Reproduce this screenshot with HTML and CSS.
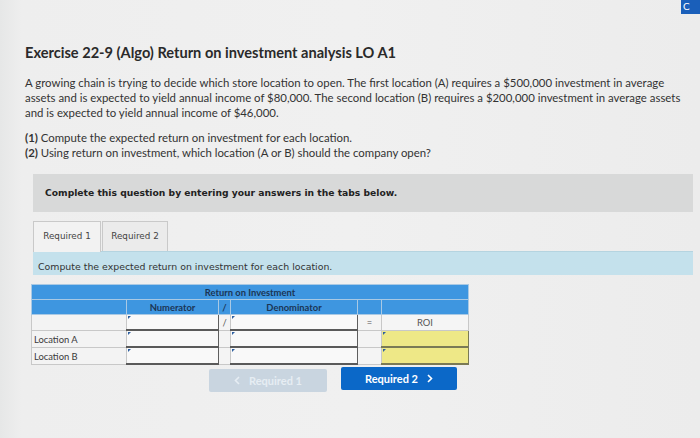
FILE: index.html
```html
<!DOCTYPE html>
<html>
<head>
<meta charset="utf-8">
<link rel="stylesheet" href="styles.css">
</head>
<body>
<div class="corner-btn">C</div>
<div class="page">
  <h1 class="title">Exercise 22-9 (Algo) Return on investment analysis LO A1</h1>
  <p class="intro">A growing chain is trying to decide which store location to open. The first location (A) requires a $500,000 investment in average<br>assets and is expected to yield annual income of $80,000. The second location (B) requires a $200,000 investment in average assets<br>and is expected to yield annual income of $46,000.</p>
  <p class="steps"><b>(1)</b> Compute the expected return on investment for each location.<br><b>(2)</b> Using return on investment, which location (A or B) should the company open?</p>

  <div class="panel">
    <div class="notice">Complete this question by entering your answers in the tabs below.</div>
    <div class="tabs">
      <div class="tab active">Required 1</div>
      <div class="tab">Required 2</div>
    </div>
    <div class="instr">Compute the expected return on investment for each location.</div>

    <table class="roi">
      <colgroup>
        <col class="c-label"><col class="c-num"><col class="c-sl"><col class="c-den"><col class="c-eq"><col class="c-roi">
      </colgroup>
      <tr class="h1"><th colspan="6">Return on Investment</th></tr>
      <tr class="h2"><th></th><th>Numerator</th><th>/</th><th>Denominator</th><th></th><th></th></tr>
      <tr class="r0"><td class="lbl"></td><td class="inp"></td><td class="op">/</td><td class="inp"></td><td class="op">=</td><td class="roi-lbl">ROI</td></tr>
      <tr class="r1"><td class="lbl">Location A</td><td class="inp"></td><td class="blank"></td><td class="inp"></td><td class="blank"></td><td class="inp yellow"></td></tr>
      <tr class="r1"><td class="lbl">Location B</td><td class="inp"></td><td class="blank"></td><td class="inp"></td><td class="blank"></td><td class="inp yellow"></td></tr>
    </table>

    <div class="nav">
      <div class="btn prev"><svg class="chev" width="6" height="9" viewBox="0 0 6 9"><path d="M5 1 L1.5 4.5 L5 8" fill="none" stroke="currentColor" stroke-width="1.6"/></svg><span>Required 1</span></div>
      <div class="btn next"><span>Required 2</span><svg class="chev" width="6" height="9" viewBox="0 0 6 9"><path d="M1 1 L4.5 4.5 L1 8" fill="none" stroke="currentColor" stroke-width="1.6"/></svg></div>
    </div>
  </div>
</div>
</body>
</html>
```
FILE: styles.css
```css
html, body {
  margin: 0;
  padding: 0;
}
body {
  background: linear-gradient(90deg, #e6e7e7 0%, #eeeeee 3%, #f0f0f0 50%, #ececec 100%);
  width: 700px;
  height: 438px;
  overflow: hidden;
  font-family: "Lato", "Liberation Sans", sans-serif;
  color: #2b2b2b;
}
.corner-btn {
  position: absolute;
  top: 0;
  right: 0;
  width: 19px;
  height: 14px;
  background: #1a5fba;
  color: #fff;
  font-size: 10px;
  line-height: 12px;
  padding-left: 2px;
  box-sizing: border-box;
}
.page {
  padding: 44px 0 0 25px;
}
.title {
  margin: 0;
  font-size: 14.6px;
  line-height: 18px;
  font-weight: 700;
  color: #2a2a2a;
}
.intro {
  margin: 13px 0 0;
  font-size: 11.4px;
  line-height: 15px;
  white-space: nowrap;
  color: #333;
}
.steps {
  margin: 11px 0 0;
  font-size: 11.4px;
  line-height: 14.5px;
  color: #333;
}
.steps b {
  font-weight: 700;
}
.panel {
  margin: 14px 0 0 8px;
  width: 660px;
}
.notice {
  background: #d8d9d9;
  height: 38px;
  box-sizing: border-box;
  padding: 13px 0 0 12px;
  font-family: "DejaVu Sans", "Verdana", sans-serif;
  font-weight: 700;
  font-size: 9.2px;
  line-height: 11px;
  color: #222;
}
.tabs {
  display: flex;
  margin-top: 9px;
  gap: 1px;
  height: 30px;
}
.tab {
  width: 66px;
  border: 1px solid #c9c9c9;
  border-bottom: none;
  background: #ebebeb;
  font-family: "DejaVu Sans", "Verdana", sans-serif;
  font-size: 8.8px;
  color: #444;
  text-align: center;
  padding-top: 9px;
  box-sizing: border-box;
}
.tab.active {
  width: 68px;
  background: #f2f2f2;
  height: 31px;
  position: relative;
  z-index: 1;
}
.instr {
  background: #c4e1ec;
  height: 24px;
  box-sizing: border-box;
  padding: 9px 0 0 5px;
  font-family: "DejaVu Sans", "Verdana", sans-serif;
  font-size: 9.4px;
  line-height: 11px;
  color: #333;
  border-top: 1px solid #b5d4e0;
}
.roi {
  margin: 9px 0 0 -2px;
  border-collapse: collapse;
  table-layout: fixed;
  width: 437px;
  font-size: 9.4px;
}
.c-label { width: 95px; }
.c-num { width: 92px; }
.c-sl { width: 12px; }
.c-den { width: 127px; }
.c-eq { width: 24px; }
.c-roi { width: 87px; }
.roi th {
  background: #3e96e0;
  color: #1b3555;
  font-weight: 700;
  border: 1px solid #a9c9e4;
  padding: 0;
  text-align: center;
  line-height: 11px;
}
.roi .h1 th { height: 14px; }
.roi .h2 th { height: 14px; }
.roi td {
  border: 1px solid #c8c8c8;
  padding: 0;
  background: #f4f4f4;
  color: #444;
  line-height: 11px;
}
.roi .r0 td { height: 14px; }
.roi .r1 td { height: 13px; padding-top: 2px; }
.roi td.lbl {
  padding-left: 2px;
  background: #f3f3f3;
  color: #3a3a3a;
}
.roi td.op {
  text-align: center;
  color: #555;
}
.roi td.roi-lbl {
  text-align: center;
  color: #555;
  background: #f5f5f5;
}
.roi td.inp {
  border: 1px solid #5f5f5f;
  border-bottom: 2px solid #5a5a5a;
  background: #f9f9f9;
  position: relative;
}
.roi td.inp::before {
  content: "";
  position: absolute;
  left: 1px;
  top: 1px;
  border-left: 3px solid #2d5fa0;
  border-bottom: 3px solid transparent;
}
.roi td.yellow {
  background: #eee887;
  border-color: #7a7a55;
}
.nav {
  display: flex;
  align-items: flex-start;
  gap: 14px;
  margin: 2px 0 0 176px;
}
.btn {
  height: 23px;
  box-sizing: border-box;
  display: flex;
  align-items: center;
  justify-content: center;
  gap: 9px;
  font-family: "Lato", "Liberation Sans", sans-serif;
  font-weight: 700;
  font-size: 11px;
  border-radius: 2px;
}
.btn.prev {
  width: 118px;
  background: #c9d5e0;
  color: #e6edf3;
  margin-top: 2px;
}
.btn.next {
  width: 116px;
  background: #0b68c8;
  color: #fff;
}
```
